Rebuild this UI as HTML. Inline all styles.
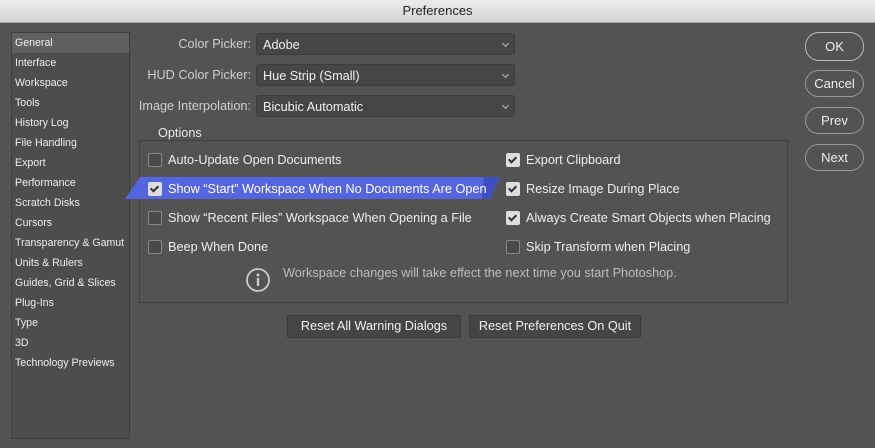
<!DOCTYPE html>
<html><head><style>
body{margin:0;width:875px;height:448px;background:#535353;font-family:"Liberation Sans",sans-serif;position:relative;overflow:hidden;color:#e6e6e6}
.t{position:absolute;left:0;top:0;width:875px;height:22px;background:linear-gradient(#ececec,#d4d4d4);border-bottom:1px solid #a8a8a8;text-align:center;font-size:13px;line-height:22px;color:#222}
.side{position:absolute;left:11px;top:32px;width:117px;height:405px;background:#4d4d4d;border:1px solid #3e3e3e}
.side div{height:20px;line-height:20px;font-size:10.6px;padding-left:3px;color:#eee;white-space:nowrap}
.side .sel{background:#606060}
.lab{position:absolute;right:624px;font-size:12.7px;color:#cfcfcf}
.dd{position:absolute;left:256px;width:259px;height:22px;background:#464646;border:1px solid #3c3c3c;border-radius:3px;font-size:12.7px;line-height:22px;padding-left:6px;box-sizing:border-box;color:#f0f0f0}
.dd:after{content:"";position:absolute;right:6px;top:7px;width:4px;height:4px;border-right:1px solid #bbb;border-bottom:1px solid #bbb;transform:rotate(45deg)}
.box{position:absolute;left:139px;top:140px;width:649px;height:163px;border:1px solid #3f3f3f;box-sizing:border-box}
.opt{position:absolute;left:156px;top:126px;font-size:12.7px;background:#535353;padding:0 2px}
.cb{position:absolute;font-size:12.7px;padding-left:20px;line-height:16px;color:#eee;white-space:nowrap}
.cb:before{content:"";position:absolute;left:0;top:1px;width:12px;height:12px;border:1px solid #888;border-radius:2px;background:#4a4a4a}
.cb.c:before{background:#ddd;border-color:#ddd}
.cb.c:after{content:"";position:absolute;left:4px;top:3px;width:3px;height:6px;border-right:2px solid #333;border-bottom:2px solid #333;transform:rotate(45deg)}
.rb{position:absolute;left:805px;width:59px;height:27px;border:1px solid #9a9a9a;border-radius:14px;box-sizing:border-box;text-align:center;line-height:25px;font-size:13px;color:#eee}
.bb{position:absolute;top:315px;height:23px;background:#454545;border:1px solid #3a3a3a;border-radius:2px;box-sizing:border-box;text-align:center;line-height:21px;font-size:12.7px;color:#f0f0f0}
</style></head><body>
<div class="t">Preferences</div>
<div class="side">
<div class="sel">General</div><div>Interface</div><div>Workspace</div><div>Tools</div><div>History Log</div><div>File Handling</div><div>Export</div><div>Performance</div><div>Scratch Disks</div><div>Cursors</div><div>Transparency &amp; Gamut</div><div>Units &amp; Rulers</div><div>Guides, Grid &amp; Slices</div><div>Plug-Ins</div><div>Type</div><div>3D</div><div>Technology Previews</div>
</div>
<div class="lab" style="top:37px">Color Picker:</div>
<div class="lab" style="top:68px">HUD Color Picker:</div>
<div class="lab" style="top:99px">Image Interpolation:</div>
<div class="dd" style="top:33px">Adobe</div>
<div class="dd" style="top:64px">Hue Strip (Small)</div>
<div class="dd" style="top:95px">Bicubic Automatic</div>
<div class="box"></div>
<div class="opt">Options</div>
<svg style="position:absolute;left:0;top:0" width="875" height="448"><polygon points="140,177 500,177 490,199 125,199" fill="#5565dd"/><polygon points="484,177 500,177 490,199 482,199" fill="#3f4fc0"/></svg>
<div class="cb" style="left:148px;top:152px">Auto-Update Open Documents</div>
<div class="cb c" style="left:148px;top:181px;color:#fff">Show “Start” Workspace When No Documents Are Open</div>
<div class="cb" style="left:148px;top:210px">Show “Recent Files” Workspace When Opening a File</div>
<div class="cb" style="left:148px;top:239px">Beep When Done</div>
<div class="cb c" style="left:506px;top:152px">Export Clipboard</div>
<div class="cb c" style="left:506px;top:181px">Resize Image During Place</div>
<div class="cb c" style="left:506px;top:210px">Always Create Smart Objects when Placing</div>
<div class="cb" style="left:506px;top:239px">Skip Transform when Placing</div>
<svg style="position:absolute;left:245px;top:267px" width="26" height="26"><circle cx="13" cy="13" r="11" fill="none" stroke="#ccc" stroke-width="1.8"/><circle cx="13" cy="8" r="1.5" fill="#ccc"/><rect x="11.8" y="11" width="2.4" height="8" fill="#ccc"/></svg>
<div style="position:absolute;left:283px;top:266px;font-size:12.7px;color:#bdbdbd">Workspace changes will take effect the next time you start Photoshop.</div>
<div class="bb" style="left:287px;width:174px">Reset All Warning Dialogs</div>
<div class="bb" style="left:469px;width:172px">Reset Preferences On Quit</div>
<div class="rb" style="top:32px;height:29px;line-height:27px;border-color:#bbb">OK</div>
<div class="rb" style="top:70px">Cancel</div>
<div class="rb" style="top:107px">Prev</div>
<div class="rb" style="top:144px">Next</div>
</body></html>
